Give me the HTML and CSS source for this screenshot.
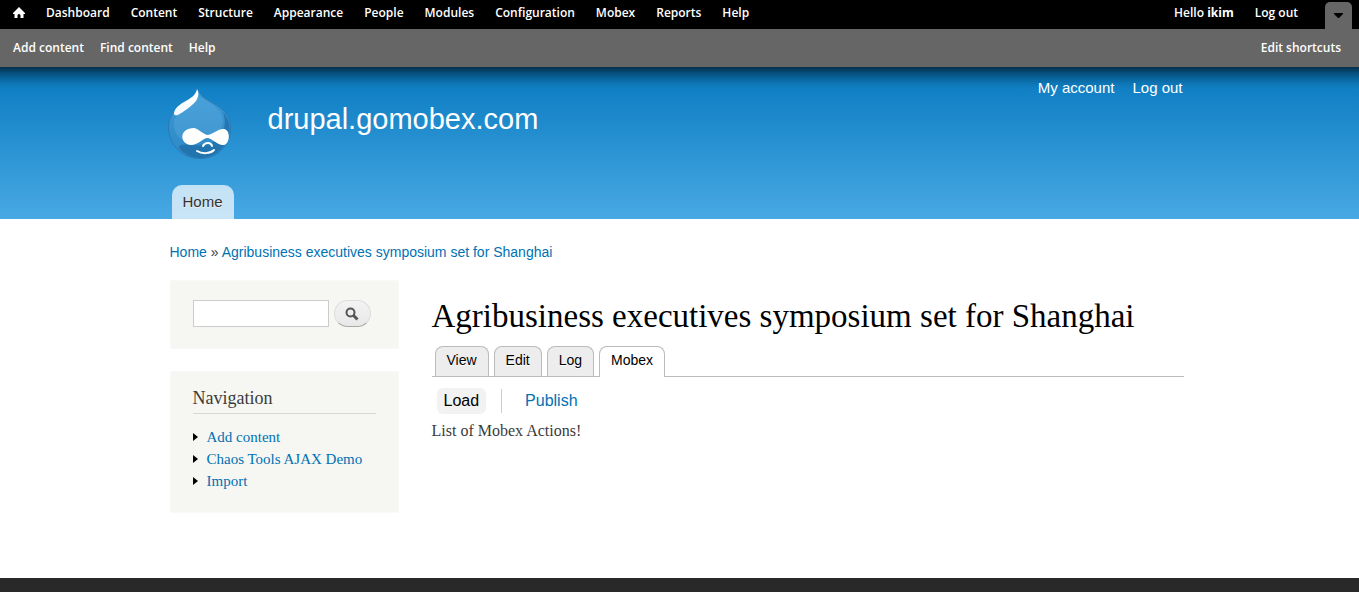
FILE: index.html
```
<!DOCTYPE html>
<html lang="en">
<head>
<meta charset="utf-8">
<title>Agribusiness executives symposium set for Shanghai | drupal.gomobex.com</title>
<link rel="stylesheet" href="styles.css">
</head>
<body>
<nav class="toolbar" aria-label="Administration">
  <ul class="toolbar-menu">
    <li><a class="toolbar-home" href="#" aria-label="Administration home"><svg width="12" height="11" viewBox="0 0 12 11"><path fill="#fff" d="M6 0 12 6v1H10.500V11H7.500V8Q6 6 4.500 8V11H1.500V7H0V6Z"/></svg></a></li>
    <li><a href="#">Dashboard</a></li>
    <li><a href="#">Content</a></li>
    <li><a href="#">Structure</a></li>
    <li><a href="#">Appearance</a></li>
    <li><a href="#">People</a></li>
    <li><a href="#">Modules</a></li>
    <li><a href="#">Configuration</a></li>
    <li><a href="#">Mobex</a></li>
    <li><a href="#">Reports</a></li>
    <li><a href="#">Help</a></li>
  </ul>
  <ul class="toolbar-menu toolbar-user">
    <li><a href="#">Hello <strong>ikim</strong></a></li>
    <li><a href="#">Log out</a></li>
  </ul>
  <button class="toolbar-toggle" type="button" aria-label="Hide shortcuts"><svg width="9" height="5" viewBox="0 0 9 5"><path d="M0 0H9V1L5 5H4L0 1Z"/></svg></button>
</nav>
<nav class="shortcuts" aria-label="Shortcuts">
  <a href="#">Add content</a>
  <a href="#">Find content</a>
  <a href="#">Help</a>
  <a class="shortcuts-edit" href="#">Edit shortcuts</a>
</nav>
<header class="header">
  <div class="container header-inner">
    <div class="branding">
      <a href="#" aria-label="Home"><svg class="logo" width="64" height="73" viewBox="0 0 64 73">
        <defs>
          <linearGradient id="drop" x1="0" y1="0" x2="0" y2="1"><stop offset="0" stop-color="#3c9ad5"/><stop offset=".6" stop-color="#3390cd"/><stop offset="1" stop-color="#2f88c4"/></linearGradient>
          <linearGradient id="shine" x1="1" y1="0" x2="0" y2="1"><stop offset="0" stop-color="#fff"/><stop offset="1" stop-color="#f5faff"/></linearGradient>
        </defs>
        <path fill="url(#drop)" stroke="#2b7ab4" d="M30 1C32 8 38 11 45 15C56 21 62.500 28 62.500 40C62.500 58 49 70.500 32 70.500C14 70.500 .5 57 .5 39C.5 27 8 20 17 14C24 10 29 8 30 1Z"/>
        <path fill="#1a69a2" opacity=".65" d="M55 24C61 40 52 56 34 57C26 58 19 56 13 57C10 58 11 61 15 64C26 73 44 72 54 60C64 49 64 34 55 24Z"/>
        <path fill="#7fc0ea" opacity=".22" d="M30 8C44 15 55 22 55 34C54 45 44 50 28 53C12 56 5 46 6 31C12 24 26 20 30 8Z"/>
        <path fill="url(#shine)" d="M29 1C31 5 31 8 28 13C23 19 15 24 10 27C6 28 5 26 7 22C12 13 27 12 29 1Z"/>
        <path fill="#fff" d="M26 40C31 41 36 47 40 47C45 46 51 40 56 41C63 42 62 56 56 57C50 58 44 50 39 50C34 51 30 57 23 57C11 56 11 40 26 40Z"/>
        <path fill="none" stroke="#fff" stroke-width="2" stroke-linecap="round" d="M35 58C37 54 43 54 44 58M29 63C34 66 42 66 46 62"/>
      </svg></a>
      <a class="site-name" href="#">drupal.gomobex.com</a>
      <nav class="user-menu" aria-label="Account"><a href="#">My account</a><a href="#">Log out</a></nav>
    </div>
    <nav class="main-menu" aria-label="Main menu"><a href="#">Home</a></nav>
  </div>
</header>
<div class="container page">
  <nav class="breadcrumb" aria-label="Breadcrumb"><a href="#">Home</a> » <a href="#">Agribusiness executives symposium set for Shanghai</a></nav>
  <div class="columns">
    <aside class="sidebar">
      <form class="block search" role="search">
        <input class="search-text" type="text" aria-label="Search">
        <button class="search-button" type="button" aria-label="Search"><svg width="14" height="14" viewBox="0 0 14 14" fill="none" stroke="#555"><circle cx="5.500" cy="5.500" r="4" stroke-width="2"/><path stroke-width="3" d="m8.500 8.500 4 4"/></svg></button>
      </form>
      <nav class="block navigation" aria-labelledby="nav-title">
        <h2 id="nav-title">Navigation</h2>
        <ul>
          <li><a href="#">Add content</a></li>
          <li><a href="#">Chaos Tools AJAX Demo</a></li>
          <li><a href="#">Import</a></li>
        </ul>
      </nav>
    </aside>
    <main class="content">
      <h1>Agribusiness executives symposium set for Shanghai</h1>
      <nav class="tabs" aria-label="Primary tabs"><a href="#">View</a><a href="#">Edit</a><a href="#">Log</a><a class="active" href="#">Mobex</a></nav>
      <nav class="subtabs" aria-label="Secondary tabs"><a class="active" href="#">Load</a><a class="publish" href="#">Publish</a></nav>
      <p>List of Mobex Actions!</p>
    </main>
  </div>
</div>
<footer class="footer"></footer>
</body>
</html>
```
FILE: styles.css
```
* { box-sizing: border-box; }
body {
  margin: 0;
  min-height: 100vh;
  display: flex;
  flex-direction: column;
  background: #fff;
  color: #3b3b3b;
  font: 15px/20px "Liberation Sans", Arial, sans-serif;
}
a { color: #0071b3; text-decoration: none; }
ul { list-style: none; margin: 0; padding: 0; }
svg { display: block; }
.toolbar, .shortcuts {
  display: flex;
  font: 600 12px/20px "Open Sans", "Noto Sans", sans-serif;
}
.toolbar a, .shortcuts a { color: #fff; }
.toolbar strong { font-weight: 700; }
.toolbar { height: 29px; padding: 0 7px 0 13px; background: #000; }
.toolbar-menu { display: flex; gap: 21px; padding-top: 3px; }
.toolbar-home { display: block; padding-top: 4px; }
.toolbar-user { margin-left: auto; }
.toolbar-toggle {
  width: 27px;
  margin: 2px 0 0 27px;
  padding: 0;
  border: 0;
  border-radius: 5px 5px 0 0;
  background: #666;
  display: grid;
  place-items: center;
}
.shortcuts { gap: 16px; padding: 9px 18px 9px 13px; background: #666; }
.shortcuts-edit { margin-left: auto; }
.container { width: 100%; max-width: 1020px; margin: 0 auto; }
.header {
  background:
    linear-gradient(rgba(0,0,0,.6), rgba(0,0,0,.32) 7px, rgba(0,0,0,.08) 16px, transparent 22px),
    linear-gradient(#0779bf, #48a9e4);
}
.branding { display: flex; align-items: flex-start; height: 118px; padding: 21px 7px 0 0; }
.logo { margin-left: -2px; }
.site-name { margin: 14px 0 0 36px; font-size: 29px; line-height: 34px; color: #fff; }
.user-menu { display: flex; gap: 18px; margin: -10px 0 0 auto; }
.user-menu a { color: #fff; }
.main-menu { display: flex; padding-left: 2px; }
.main-menu a {
  padding: 7px 11px;
  border-radius: 10px 10px 0 0;
  background: rgba(255,255,255,.7);
  color: #333;
  text-shadow: 0 1px #eee;
}
.page { padding-bottom: 65px; }
.breadcrumb { padding: 23px 0 18px; font-size: 14px; }
.columns { display: flex; gap: 33px; }
.sidebar { width: 229px; flex: none; display: flex; flex-direction: column; gap: 22px; }
.block { background: #f6f6f2; border: 1px solid #f9f9f9; }
.search { display: flex; gap: 5px; padding: 19px 22px 21px; }
.search-text { width: 136px; height: 27px; margin: 0; padding: 4px; border: 1px solid #ccc; background: #fff; }
.search-button {
  width: 37px;
  height: 27px;
  padding: 0;
  display: grid;
  place-items: center;
  border: 1px solid #ddd;
  border-bottom-color: #aaa;
  border-radius: 14px;
  background: linear-gradient(#f3f3f3, #e8e8e8);
}
.navigation, .content p { font-family: "Liberation Serif", Georgia, serif; }
.navigation { padding: 16px 22px 20px; }
.navigation h2 { margin: 0 0 12px; padding-bottom: 4px; border-bottom: 1px solid #d6d6d6; font-size: 18px; line-height: 21px; font-weight: 400; }
.navigation li { display: flex; align-items: center; gap: 9px; height: 22px; font-size: 15px; }
.navigation li::before { content: ""; border: solid transparent; border-width: 4px 0 4px 5px; border-left-color: #000; }
.content { flex: 1; padding-right: 6px; }
h1 { margin: 16px 0 10px; color: #000; font: 33px/40px "Liberation Serif", Georgia, serif; }
.tabs { display: flex; gap: 5px; padding-left: 3px; border-bottom: 1px solid #bbb; font-size: 14px; }
.tabs a {
  padding: 3px 11px 6px;
  border: 1px solid #bbb;
  border-bottom: 0;
  border-radius: 8px 8px 0 0;
  background: #ededed;
  color: #000;
  text-shadow: 0 1px #fff;
}
.tabs .active { margin-bottom: -1px; padding-bottom: 7px; background: #fff; }
.subtabs { display: flex; align-items: center; padding: 11px 5px 0; font-size: 16px; }
.subtabs .active { padding: 3px 7px; border-radius: 6px; background: #f2f2f2; color: #000; }
.publish { margin-left: 15px; padding: 2px 0 2px 23px; border-left: 1px solid #ccc; }
.content p { margin: 7px 0 0; font-size: 16px; }
.footer { flex: 1; min-height: 14px; background: #292929; }
```
